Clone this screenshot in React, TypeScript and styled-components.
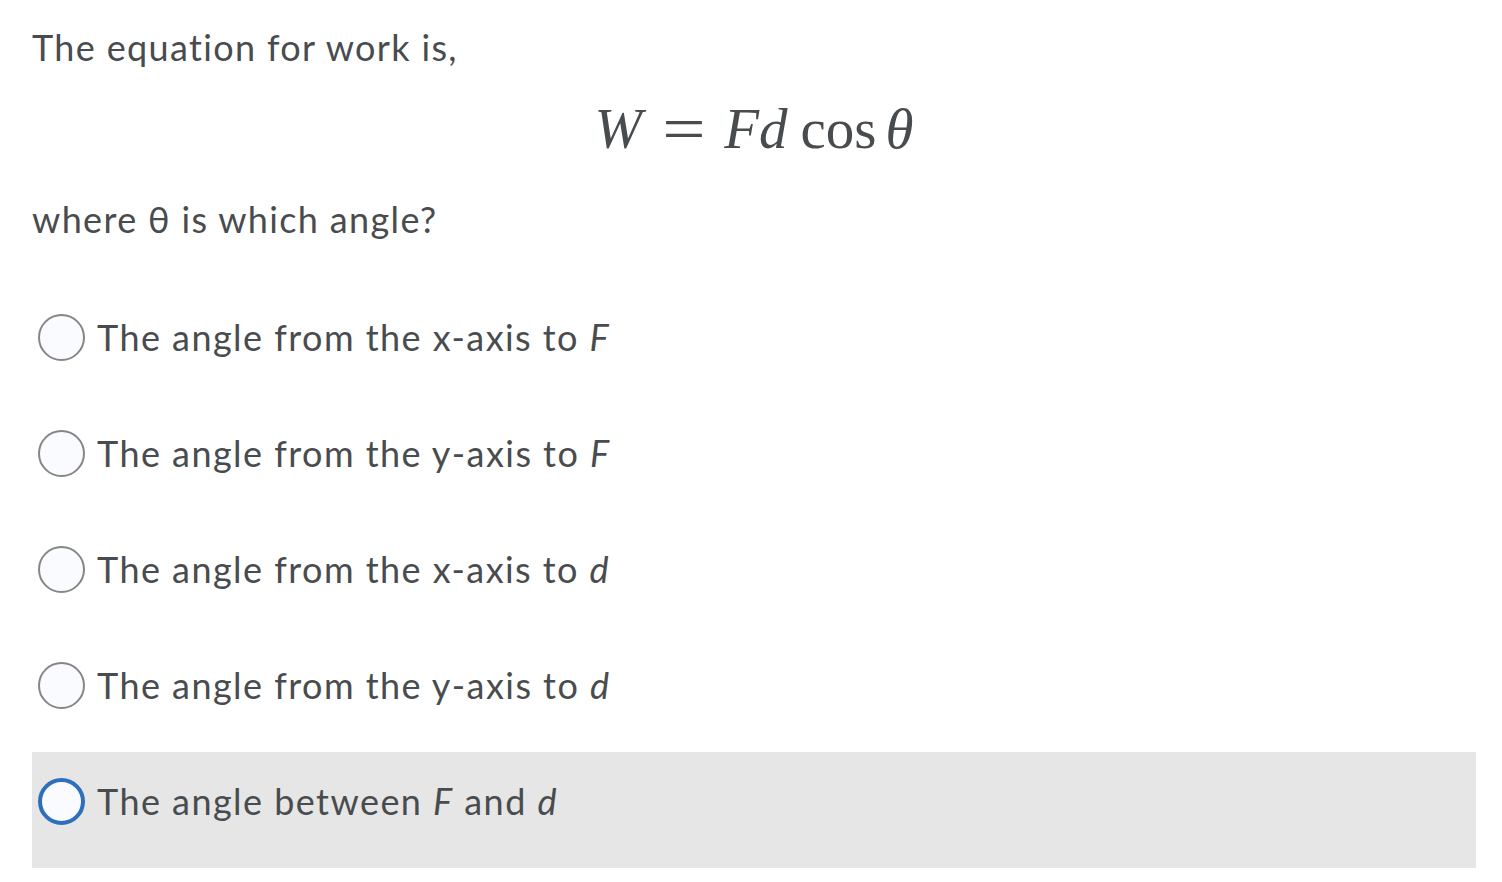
import styled, { createGlobalStyle } from "styled-components";

const GlobalStyle = createGlobalStyle`
    html, body {
        margin: 0;
        padding: 0;
        background: #ffffff;
    }
    body {
        font-family: Lato, "Open Sans", sans-serif;
        color: #494c4e;
        font-variant-ligatures: none;
    }
`;

const QuestionContainer = styled.div`
    width: 1444px;
    padding: 20px 26px 0 32px;
`;

const Text = styled.div`
    font-size: 36px;
    line-height: 54px;
    letter-spacing: 1.35px;
`;

const Equation = styled.div`
    margin: 21px 0 30px;
    text-align: center;
    font-family: "Liberation Serif", "Times New Roman", serif;
    font-size: 57px;
    line-height: 67px;
    color: #494c4e;
`;

const MathVar = styled.i`
    font-style: italic;
`;

const MathOp = styled.span`
    display: inline-block;
    margin: 0 24px 0 26px;
    transform: scaleX(1.35) scaleY(1.1);
`;

const MathFn = styled.span`
    margin-left: 13px;
    margin-right: 9px;
`;

const OptionList = styled.div`
    display: flex;
    flex-direction: column;
    margin-top: 42px;
`;

const OptionRow = styled.label<{ $active?: boolean }>`
    display: flex;
    align-items: center;
    height: 116px;
    box-sizing: border-box;
    padding: 0 0 18px 6px;
    background: ${(p) => (p.$active ? "#e6e6e6" : "transparent")};
    cursor: pointer;
`;

const Radio = styled.span<{ $focused?: boolean }>`
    width: 47px;
    height: 47px;
    box-sizing: border-box;
    border-radius: 50%;
    flex-shrink: 0;
    background: #f9fbff;
    border: ${(p) => (p.$focused ? "4px solid #2d6fba" : "2px solid #868686")};
    margin-right: 12px;
`;

const OptionText = styled.span`
    font-size: 36px;
    line-height: 54px;
    letter-spacing: 1.45px;
`;

const Em = styled.i`
    font-style: italic;
`;

const options = [
    { pre: "The angle from the x-axis to ", v: "F" },
    { pre: "The angle from the y-axis to ", v: "F" },
    { pre: "The angle from the x-axis to ", v: "d" },
    { pre: "The angle from the y-axis to ", v: "d" },
];

const App = () => {
    return (
        <>
            <GlobalStyle />
            <QuestionContainer>
                <Text>The equation for work is,</Text>
                <Equation>
                    <MathVar>W</MathVar>
                    <MathOp>=</MathOp>
                    <MathVar>Fd</MathVar>
                    <MathFn>cos</MathFn>
                    <MathVar>θ</MathVar>
                </Equation>
                <Text>where θ is which angle?</Text>
                <OptionList>
                    {options.map((o, i) => (
                        <OptionRow key={i}>
                            <Radio />
                            <OptionText>
                                {o.pre}
                                <Em>{o.v}</Em>
                            </OptionText>
                        </OptionRow>
                    ))}
                    <OptionRow $active>
                        <Radio $focused />
                        <OptionText>
                            The angle between <Em>F</Em> and <Em>d</Em>
                        </OptionText>
                    </OptionRow>
                </OptionList>
            </QuestionContainer>
        </>
    );
};

export default App;
